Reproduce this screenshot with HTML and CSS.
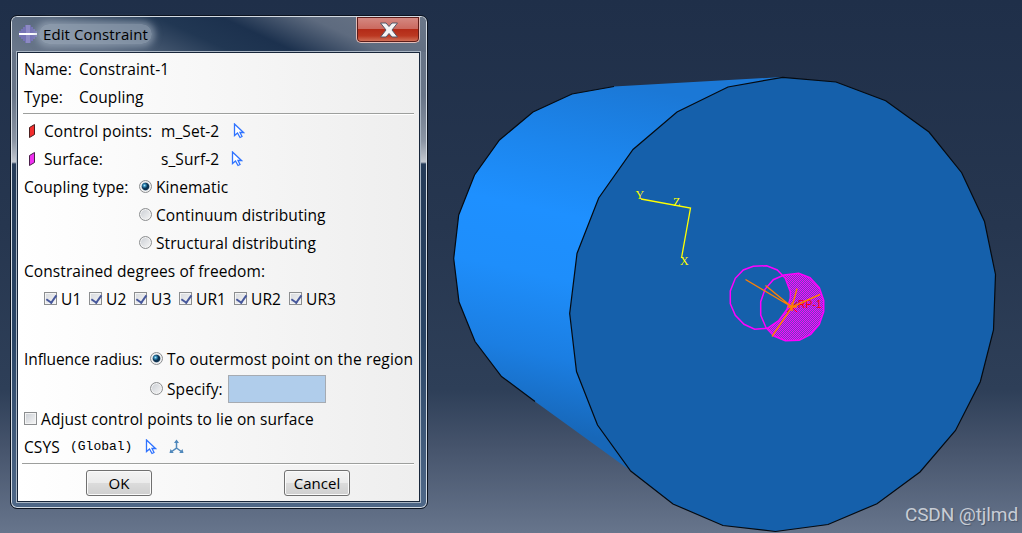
FILE: index.html
```
<!DOCTYPE html>
<html lang="en">
<head>
    <meta charset="UTF-8">
    <meta name="viewport" content="width=device-width, initial-scale=1.0">
    <title>Edit Constraint</title>
    <link rel="stylesheet" href="styles.css">
</head>
<body>
    <svg class="viewport" width="1022" height="533" viewBox="0 0 1022 533">
        <defs>
            <linearGradient id="side" gradientUnits="userSpaceOnUse" x1="610" y1="80" x2="535" y2="425">
                <stop offset="0" stop-color="#1b78d6"/>
                <stop offset="0.22" stop-color="#1c86ee"/>
                <stop offset="0.4" stop-color="#1e90ff"/>
                <stop offset="0.58" stop-color="#1e8efb"/>
                <stop offset="0.8" stop-color="#1b7ee2"/>
                <stop offset="1" stop-color="#1767b8"/>
            </linearGradient>
            <pattern id="mesh" width="2" height="2" patternUnits="userSpaceOnUse">
                <rect width="2" height="2" fill="#6a48c0"/>
                <path d="M0 0H1V1H0Z M1 1H2V2H1Z" fill="#ff00ff"/>
            </pattern>
        </defs>

        <!-- cylinder side and front face -->
        <path fill="url(#side)" d="M783 77 L614 86.5 572 94 533 112 499.5 140 474.5 175 458.7 215 453.7 258.5 459 302 475 341.5 501.5 376.5 535 401.5 631 471 800 400Z"/>
        <path class="edge" d="M614 86.5 L572 94 533 112 499.5 140 474.5 175 458.7 215 453.7 258.5 459 302 475 341.5 501.5 376.5 535 401.5"/>
        <path class="edge face" d="M782.7 77.3 L728 87 677 112 633 149.5 598.7 198 577 253.5 569.7 313.5 576.5 371.5 597.5 425 630.7 471 673 504 723 525.5 775.5 531.5 828 524.5 877 503.7 920 472 955.5 430.5 980.3 381.7 993.5 330 995.5 274.5 984.5 221.5 961.7 172.7 929 132 885.7 100.7 836 82Z"/>

        <!-- coordinate triad -->
        <path class="triad" d="M641 199 L690.5 208 681.5 258"/>
        <g class="triad-text">
            <text x="635.5" y="199">Y</text>
            <text x="673" y="206">Z</text>
            <text x="680" y="265">X</text>
        </g>

        <!-- coupled surface -->
        <path fill="url(#mesh)" d="M784 275 L798.7 273.3 810 277.7 819.3 287.7 823.7 300.3 823.7 311.7 819.3 324.3 810.7 334.3 799.3 340.3 785.3 340.7 774 336 767 328.5 778.7 320.7 787 309.3 790.3 298.3 790.3 291.7 785.3 278.3Z"/>
        <path class="ring" d="M784 275 L798.7 273.3 810 277.7 819.3 287.7 823.7 300.3 823.7 311.7 819.3 324.3 810.7 334.3 799.3 340.3 785.3 340.7 774 336 766 327.7 760.7 315 760.7 301.7 765 289.3 773.3 279.7Z"/>
        <path class="ring" d="M753.3 266.3 L766.7 265.7 777.3 270 785.3 278.3 790.3 291.7 790.3 298.3 787 309.3 778.7 320.7 767.3 328.3 754.7 329.3 744 324.3 735.3 315.3 730.3 303.7 730.3 291 735.3 278.3 743.3 270Z"/>
        <text class="rp" x="798" y="308">RP-1</text>
        <path class="cross" d="M787 303 L797 312 M797 302 L787 312"/>
        <path class="spokes" d="M745.5 279.5 L792 307 765.5 285.5 M792 307 L797 288.5 M792 307 L820 294.5 M792 307 L772 336.5 M787.5 307 H797 M792 302.5 V311"/>
    </svg>

    <div class="dialog">
        <div class="titlebar">
            <svg class="app-icon" width="18" height="18" viewBox="0 0 18 18">
                <path d="M6 0H12V2H14V4H16V6H18V12H16V14H14V16H12V18H6V16H4V14H2V12H0V6H2V4H4V2H6Z" fill="#7573b4"/>
                <path d="M7 0H11V18H7Z" fill="#8d8ac4"/>
                <path d="M0 9H18" stroke="#fff" stroke-width="2"/>
            </svg>
            <span class="title">Edit Constraint</span>
            <button class="close" aria-label="Close">
                <svg width="20" height="16" viewBox="0 0 20 16">
                    <path d="M1.5 1H7L10 4.5 13 1H18.5L13 8 18.5 15H13L10 11.5 7 15H1.5L7 8Z" fill="#f4f4f4" stroke="#535666"/>
                </svg>
            </button>
        </div>

        <form class="content">
            <div class="row"><span class="name">Name:</span><span>Constraint-1</span></div>
            <div class="row"><span class="name">Type:</span><span>Coupling</span></div>
            <hr class="separator">
            <div class="row">
                <svg class="flag" width="8" height="16" viewBox="0 0 8 16"><path d="M1.5 4.5L6.5 1.5V11.5L1.5 14.5Z" fill="#f32d2d" stroke="#4a2020"/></svg>
                <span class="pick-label">Control points:</span>
                <span class="pick-value">m_Set-2</span>
                <svg class="cursor" width="12" height="16" viewBox="0 0 12 16"><path d="M1.5 1V12.5L4.5 10 7 14.5 9 13.5 7 9.5H10.5Z"/></svg>
            </div>
            <div class="row">
                <svg class="flag" width="8" height="16" viewBox="0 0 8 16"><path d="M1.5 4.5L6.5 1.5V11.5L1.5 14.5Z" fill="#f030f0" stroke="#4a204a"/></svg>
                <span class="pick-label">Surface:</span>
                <span class="pick-value short">s_Surf-2</span>
                <svg class="cursor" width="12" height="16" viewBox="0 0 12 16"><path d="M1.5 1V12.5L4.5 10 7 14.5 9 13.5 7 9.5H10.5Z"/></svg>
            </div>
            <div class="row">
                <span class="type-label">Coupling type:</span>
                <label><input type="radio" name="coupling" checked>Kinematic</label>
            </div>
            <div class="row indent-type"><label><input type="radio" name="coupling">Continuum distributing</label></div>
            <div class="row indent-type"><label><input type="radio" name="coupling">Structural distributing</label></div>
            <div class="row">Constrained degrees of freedom:</div>
            <div class="row dof">
                <label><input type="checkbox" checked>U1</label>
                <label><input type="checkbox" checked>U2</label>
                <label><input type="checkbox" checked>U3</label>
                <label><input type="checkbox" checked>UR1</label>
                <label><input type="checkbox" checked>UR2</label>
                <label><input type="checkbox" checked>UR3</label>
            </div>
            <div class="row tall radius">
                <span class="radius-label">Influence radius:</span>
                <label class="outermost"><input type="radio" name="radius" checked>To outermost point on the region</label>
            </div>
            <div class="row tall indent-radius">
                <label class="specify"><input type="radio" name="radius">Specify:</label>
                <input class="field" type="text" disabled>
            </div>
            <div class="row tall"><label><input type="checkbox">Adjust control points to lie on surface</label></div>
            <div class="row csys">
                <span class="csys-label">CSYS</span>
                <span class="global">(Global)</span>
                <svg class="cursor" width="12" height="16" viewBox="0 0 12 16"><path d="M1.5 1V12.5L4.5 10 7 14.5 9 13.5 7 9.5H10.5Z"/></svg>
                <svg class="axes" width="15" height="16" viewBox="0 0 15 16">
                    <path d="M7.5 2V9L2 13M7.5 9L13 13" fill="none" stroke="#5088bb" stroke-width="1.5"/>
                    <path d="M5 4L7.5 0.5 10 4ZM0.5 14L1.5 10 4.8 14ZM14.5 14L13.5 10 10.2 14Z" fill="#5088bb"/>
                </svg>
            </div>
            <hr class="separator wide">
            <div class="buttons">
                <button type="button">OK</button>
                <button type="button">Cancel</button>
            </div>
        </form>
    </div>

    <div class="watermark">CSDN @tjlmd</div>
</body>
</html>
```
FILE: styles.css
```
* {
    box-sizing: border-box;
}
body {
    position: relative;
    width: 1022px;
    height: 533px;
    margin: 0;
    overflow: hidden;
    background: linear-gradient(#1f2f49 0, #26364f 225px, #2e3f58 390px, #45536b 445px, #67758c 533px);
    font-family: "Open Sans", "Noto Sans", sans-serif;
    font-size: 15px;
    color: #000;
}
.viewport {
    display: block;
}
.edge {
    fill: none;
    stroke: #050a10;
    stroke-width: 1.2;
}
.face {
    fill: #1560ab;
}
.triad {
    fill: none;
    stroke: #ffff00;
    stroke-width: 1.3;
}
.triad-text {
    font: 12px "Liberation Serif", serif;
    fill: #ffff00;
}
.ring {
    fill: none;
    stroke: #ff00ff;
    stroke-width: 1.5;
}
.rp {
    font: 10.5px "Liberation Sans", sans-serif;
    fill: #ff0000;
}
.cross {
    stroke: #ff0000;
}
.spokes {
    fill: none;
    stroke: #ff8000;
    stroke-width: 1.4;
}

/* dialog window */
.dialog {
    position: absolute;
    left: 10px;
    top: 15px;
    width: 418px;
    height: 494px;
    padding: 0 7px 0 6px;
    border: 1px solid #0c1320;
    border-radius: 7px;
    box-shadow: inset 0 0 0 1px #d3dae2;
    background: linear-gradient(#657285 0, #687588 80px, #8b95a4 125px, #c3c8d0 146px, #253b58 148px, #2a4566 320px, #4d6686 480px);
}
.titlebar {
    display: flex;
    align-items: flex-start;
    height: 35px;
    margin: 1px -6px 0 -5px;
    padding: 0 6px 0 7px;
    border-radius: 5px 5px 0 0;
    background: linear-gradient(25deg, #6b788b 0, #5a6a80 20%, #213753 45%, #1c314e 58%, #5e6b7f 76%, #6b7789 100%);
}
.app-icon {
    margin-top: 8px;
}
.title {
    margin: 7px 0 0 2px;
    padding: 0 4px;
    line-height: 20px;
    letter-spacing: 0.1px;
    border-radius: 10px;
    background: rgba(170, 184, 198, 0.6);
    box-shadow: 0 0 7px 3px rgba(170, 184, 198, 0.6);
}
.close {
    display: flex;
    justify-content: center;
    align-items: center;
    width: 64px;
    height: 26px;
    margin-left: auto;
    padding: 0 0 0 2px;
    border: 1px solid #e2bdb8;
    border-top: 0;
    border-radius: 0 0 5px 5px;
    background: linear-gradient(#d58b84 0, #cb6a60 46%, #b32a17 48%, #bb3821 75%, #d3785f 100%);
    box-shadow: inset 0 0 0 1px #5d1d1a;
}
.content {
    display: flex;
    flex-direction: column;
    height: 450px;
    padding: 2px 5px 0 6px;
    border: 1px solid #18263a;
    outline: 1px solid #a9b5c3;
    background: linear-gradient(90deg, #fff, #eee);
    font-size: 15.5px;
    letter-spacing: 0.08px;
}
.row {
    display: flex;
    flex: none;
    align-items: center;
    height: 28px;
    white-space: nowrap;
}
.row label {
    display: flex;
    align-items: center;
}
.name {
    width: 55px;
}
.separator {
    flex: none;
    width: 391px;
    height: 2px;
    margin: 2px 0 2px -1px;
    border: 0;
    border-top: 1px solid #9d9f9d;
    border-bottom: 1px solid #fff;
}
.flag {
    margin: 0 8px 0 4px;
}
.pick-label {
    width: 117px;
}
.pick-value {
    width: 72px;
}
.pick-value.short {
    width: 70px;
}
.cursor {
    fill: #fff;
    stroke: #2f73ff;
    stroke-width: 1.3;
}
.type-label {
    width: 115px;
}
.indent-type {
    padding-left: 115px;
}
input[type="radio"],
input[type="checkbox"] {
    appearance: none;
    flex: none;
    width: 13px;
    height: 13px;
    margin: 0 4px 2px 0;
    border: 1px solid #8c8e90;
    background: linear-gradient(135deg, #c9cdd3, #f7f7f7);
    box-shadow: inset 0 0 0 1px #f4f4f4;
}
input[type="radio"] {
    border-radius: 50%;
}
input[type="radio"]:checked {
    background: radial-gradient(circle at 4.5px 4.5px, #a9e4f8 0, #2c83b0 1.5px, transparent 3px), radial-gradient(circle, #0d3352 3.3px, #e0e4e8 4.3px);
}
input[type="checkbox"]:checked {
    background: linear-gradient(135deg, #d5d8dd, #f7f7f7);
}
input[type="checkbox"]:checked::after {
    content: "";
    display: block;
    width: 5px;
    height: 8px;
    margin: 0 0 0 3px;
    border: solid #46579b;
    border-width: 0 2px 2px 0;
    transform: rotate(35deg);
}
.dof {
    padding-left: 20px;
}
.dof label {
    width: 45px;
}
.dof label:nth-child(n+4) {
    width: 55px;
}
.tall {
    height: 30px;
}
.radius {
    margin-top: 31px;
}
.radius-label {
    width: 126px;
    letter-spacing: -0.1px;
}
.outermost {
    letter-spacing: 0.18px;
}
.indent-radius {
    padding-left: 126px;
}
.specify {
    width: 78px;
}
.field {
    width: 98px;
    height: 28px;
    border: 1px solid #a6abb2;
    background: #b0cdeb;
}
.csys {
    height: 27px;
    margin-top: -1px;
}
.csys-label {
    width: 46px;
}
.global {
    width: 75px;
    font: 13px "Liberation Mono", monospace;
    letter-spacing: 0;
}
.axes {
    margin-left: 12px;
}
.separator.wide {
    width: 392px;
    margin: 3px 0 5px -2px;
}
.buttons {
    display: flex;
    gap: 132px;
    padding-left: 62px;
}
.buttons button {
    width: 66px;
    height: 26px;
    padding: 0;
    border: 1px solid #707070;
    border-radius: 3px;
    background: linear-gradient(#f3f3f3 0, #ebebeb 48%, #dcdcdc 50%, #cfcfcf 100%);
    box-shadow: inset 0 0 0 1px #fafafa;
    font: 15px "Open Sans", sans-serif;
}
.watermark {
    position: absolute;
    right: 4px;
    bottom: 7px;
    font: 19px/22px Roboto, sans-serif;
    letter-spacing: -0.1px;
    color: #c8cdd5;
    text-shadow: 1px 1px 1px #4a566a;
}
```
